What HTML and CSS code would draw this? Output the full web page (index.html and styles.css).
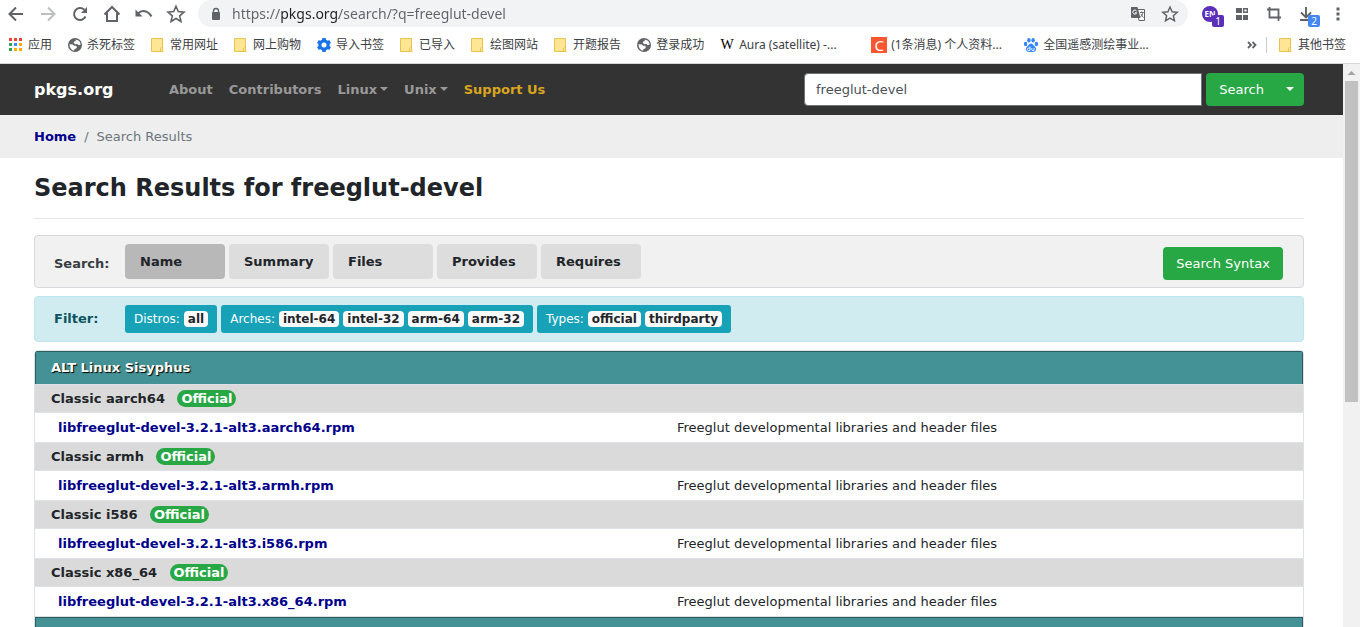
FILE: index.html
```html
<!DOCTYPE html>
<html lang="en">
<head>
    <meta charset="UTF-8">
    <meta name="viewport" content="width=device-width, initial-scale=1.0">
    <title>freeglut-devel - pkgs.org</title>
    <link rel="stylesheet" href="styles.css">
</head>
<body>
    <!-- shared icons -->
    <svg class="sprite" width="0" height="0">
        <symbol id="folder" viewBox="0 0 16 16">
            <path d="M1.500 1.500h11v10.500l.5 1v1.500h-11.500z" fill="#ffe694" stroke="#e8c44a"/>
            <path d="M10.500 14.500v-3l1-1 1 1" fill="none" stroke="#e8c44a"/>
        </symbol>
        <symbol id="globe" viewBox="0 0 16 16">
            <circle cx="8" cy="8" r="7" fill="#5f6368"/>
            <path d="M2.500 7.200l3.300.2 1.300 1.300h1.900l1 1.200-.8 1.500-1.600.6-.6 1.700c-2.800-.6-4.600-3.200-4.500-6.500zM8.500 2.600l3 .9c1.300.9 2 2.200 2.100 4l-1.800.7-1.400-1.100-2 .1-1.700-1.300.3-1.300 1.800-.4z" fill="#fff"/>
        </symbol>
        <symbol id="star" viewBox="0 0 20 20">
            <path d="M10 2.300l2.300 5.300 5.700.5-4.300 3.800 1.300 5.600-5-3-5 3 1.300-5.600L2 8.100l5.700-.5z" fill="none" stroke="#5f6368" stroke-width="1.600"/>
        </symbol>
    </svg>

    <header class="browser">
        <div class="toolbar">
            <button class="tool" aria-label="Back"><svg width="20" height="20" viewBox="0 0 20 20"><path d="M17 10H4M10 3.500L3.500 10l6.500 6.500" fill="none" stroke="#5f6368" stroke-width="2"/></svg></button>
            <button class="tool" aria-label="Forward"><svg width="20" height="20" viewBox="0 0 20 20"><path d="M3 10h13M10 3.500l6.500 6.500-6.500 6.500" fill="none" stroke="#bcbec1" stroke-width="2"/></svg></button>
            <button class="tool" aria-label="Reload"><svg width="20" height="20" viewBox="0 0 20 20"><path d="M15.500 12.500A6 6 0 1 1 14.300 5.800" fill="none" stroke="#5f6368" stroke-width="2"/><path d="M17 3v6h-6z" fill="#5f6368"/></svg></button>
            <button class="tool" aria-label="Home"><svg width="20" height="20" viewBox="0 0 20 20"><path d="M2.500 10.500L10 3l7.500 7.500M5 9v8h10V9" fill="none" stroke="#5f6368" stroke-width="2"/></svg></button>
            <button class="tool" aria-label="Undo"><svg width="20" height="20" viewBox="0 0 20 20"><path d="M4 9.500C8 5.500 14 6.500 17.500 12.500" fill="none" stroke="#5f6368" stroke-width="2"/><path d="M1.500 5.500v7h7z" fill="#5f6368"/></svg></button>
            <button class="tool" aria-label="Favourites"><svg width="20" height="20"><use href="#star"/></svg></button>
            <div class="omnibox">
                <svg width="14" height="14" viewBox="0 0 14 14"><rect x="3" y="5" width="8" height="8" rx="1" fill="#5f6368"/><path d="M4.500 5.500V4a2.500 2.500 0 0 1 5 0v1.500" fill="none" stroke="#5f6368" stroke-width="1.300"/></svg>
                <input class="url" type="text" aria-label="Address" value="https://pkgs.org/search/?q=freeglut-devel">
                <button class="tool" aria-label="Translate"><svg width="16" height="16" viewBox="0 0 16 16"><path d="M7 3.500h7.500v11H9z" fill="#fff" stroke="#5f6368"/><path d="M1 1h6.500L10.500 12H2a1 1 0 0 1-1-1z" fill="#5f6368"/><path d="M6.500 5a2 2 0 1 0 .2 1.800H5" fill="none" stroke="#fff"/><path d="M9.800 6.500h4M11.800 5.300v1.200M13 6.500c-.3 2-1.200 3.200-2.500 4.500M10.800 8l2.700 3.500" fill="none" stroke="#5f6368" stroke-width=".9"/></svg></button>
                <button class="tool" aria-label="Bookmark this page"><svg width="18" height="18" viewBox="0 0 20 20"><use href="#star" width="20" height="20"/></svg></button>
            </div>
            <button class="tool" aria-label="Dictionary"><span class="en">EN</span><span class="count purple">1</span></button>
            <button class="tool" aria-label="Extensions"><svg width="14" height="14" viewBox="0 0 14 14"><path d="M1 1h6v5H1zM1 8h6v5H1zM8 8h5v5H8z" fill="#5f6368"/><path d="M8.700 1.700h3.600v3.600H8.700z" fill="none" stroke="#5f6368" stroke-width="1.400"/></svg></button>
            <button class="tool" aria-label="Crop"><svg width="16" height="16" viewBox="0 0 16 16"><path d="M1 3.500h11.500V15M3.500 1v10.500H15" fill="none" stroke="#5f6368" stroke-width="1.800"/></svg></button>
            <button class="tool" aria-label="Downloads"><svg width="16" height="16" viewBox="0 0 16 16"><path d="M8 1v10M3 6.500L8 11.500 13 6.500M2 14h12" fill="none" stroke="#5f6368" stroke-width="1.900"/></svg><span class="count blue">2</span></button>
            <button class="tool" aria-label="Menu"><svg width="4" height="16" viewBox="0 0 4 16"><path d="M.5 1.500h3v3h-3zM.5 6.500h3v3h-3zM.5 11.500h3v3h-3z" fill="#5f6368"/></svg></button>
        </div>

        <nav class="bookmarks" aria-label="Bookmarks">
            <a href="#"><svg width="16" height="16" viewBox="0 0 16 16"><path d="M1 1h3v3H1zM6 1h3v3H6zM11 1h3v3h-3z" fill="#ea4335"/><path d="M1 6h3v3H1zM1 11h3v3H1z" fill="#34a060"/><path d="M6 6h3v3H6z" fill="#4285f4"/><path d="M11 6h3v3h-3zM6 11h3v3H6zM11 11h3v3h-3z" fill="#fbac05"/></svg>应用</a>
            <a href="#"><svg width="16" height="16"><use href="#globe"/></svg>杀死标签</a>
            <a href="#"><svg width="16" height="16"><use href="#folder"/></svg>常用网址</a>
            <a href="#"><svg width="16" height="16"><use href="#folder"/></svg>网上购物</a>
            <a href="#"><svg width="16" height="16" viewBox="0 0 16 16"><circle cx="8" cy="8" r="4" fill="none" stroke="#1a73e8" stroke-width="3.400"/><path d="M8 1v14M1.900 4.500l12.200 7M1.900 11.500l12.200-7" stroke="#1a73e8" stroke-width="3.600"/><circle cx="8" cy="8" r="2.500" fill="#fff"/></svg>导入书签</a>
            <a href="#"><svg width="16" height="16"><use href="#folder"/></svg>已导入</a>
            <a href="#"><svg width="16" height="16"><use href="#folder"/></svg>绘图网站</a>
            <a href="#"><svg width="16" height="16"><use href="#folder"/></svg>开题报告</a>
            <a href="#"><svg width="16" height="16"><use href="#globe"/></svg>登录成功</a>
            <a class="long" href="#"><span class="wiki">W</span>Aura (satellite) -...</a>
            <a class="long" href="#"><span class="csdn">C</span>(1条消息) 个人资料...</a>
            <a class="long" href="#"><svg width="16" height="16" viewBox="0 0 16 16"><g fill="#3385ff"><ellipse cx="2.600" cy="7" rx="1.700" ry="2.200"/><ellipse cx="5.900" cy="3.200" rx="1.700" ry="2.300"/><ellipse cx="10.100" cy="3.200" rx="1.700" ry="2.300"/><ellipse cx="13.400" cy="7" rx="1.700" ry="2.200"/><path d="M8 6.500c1.600 0 2.200 1.600 3.400 2.700 1.300 1.100 2 2.200 1.600 3.800-.5 1.900-2.600 2-5 2s-4.500-.1-5-2c-.4-1.600.3-2.700 1.600-3.800C5.800 8.100 6.400 6.500 8 6.500z"/></g><path d="M7 9.500v4H5.500a1.200 1.200 0 0 1 0-2.400H7M8.800 11v1.800c0 .5.300.7.700.7H11V11" fill="none" stroke="#fff" stroke-width=".9"/></svg>全国遥感测绘事业...</a>
            <button class="more" aria-label="More bookmarks"><svg width="10" height="8" viewBox="0 0 10 8"><path d="M1 1l3 3-3 3M5.500 1l3 3-3 3" fill="none" stroke="#5f6368" stroke-width="1.800"/></svg></button>
            <a class="other" href="#"><svg width="16" height="16"><use href="#folder"/></svg>其他书签</a>
        </nav>
    </header>

    <div class="viewport">
        <div class="page">
            <nav class="navbar">
                <a class="brand" href="#">pkgs.org</a>
                <a class="nav-link" href="#">About</a>
                <a class="nav-link" href="#">Contributors</a>
                <a class="nav-link caret" href="#">Linux</a>
                <a class="nav-link caret" href="#">Unix</a>
                <a class="nav-link support" href="#">Support Us</a>
                <form class="search-form">
                    <input class="query" type="text" name="q" aria-label="Package" value="freeglut-devel">
                    <div class="btn-group">
                        <button class="btn" type="button">Search</button>
                        <button class="btn toggle caret" type="button" aria-label="Search options"></button>
                    </div>
                </form>
            </nav>

            <div class="breadcrumb">
                <a href="#">Home</a>
                <span class="slash">/</span>
                <span>Search Results</span>
            </div>

            <main class="content">
                <h1>Search Results for freeglut-devel</h1>

                <div class="panel search-panel">
                    <strong class="label">Search:</strong>
                    <button class="tab active">Name</button>
                    <button class="tab">Summary</button>
                    <button class="tab">Files</button>
                    <button class="tab">Provides</button>
                    <button class="tab">Requires</button>
                    <button class="btn syntax">Search Syntax</button>
                </div>

                <div class="panel filter-panel">
                    <strong class="label">Filter:</strong>
                    <button class="filter">Distros: <span class="badge">all</span></button>
                    <button class="filter">Arches: <span class="badge">intel-64</span><span class="badge">intel-32</span><span class="badge">arm-64</span><span class="badge">arm-32</span></button>
                    <button class="filter">Types: <span class="badge">official</span><span class="badge">thirdparty</span></button>
                </div>

                <div class="card">
                    <table class="results">
                        <tr class="distro"><th colspan="2">ALT Linux Sisyphus</th></tr>
                        <tr class="repo"><th colspan="2">Classic aarch64 <span class="official">Official</span></th></tr>
                        <tr class="package"><td><a href="#">libfreeglut-devel-3.2.1-alt3.aarch64.rpm</a></td><td>Freeglut developmental libraries and header files</td></tr>
                        <tr class="repo"><th colspan="2">Classic armh <span class="official">Official</span></th></tr>
                        <tr class="package"><td><a href="#">libfreeglut-devel-3.2.1-alt3.armh.rpm</a></td><td>Freeglut developmental libraries and header files</td></tr>
                        <tr class="repo"><th colspan="2">Classic i586 <span class="official">Official</span></th></tr>
                        <tr class="package"><td><a href="#">libfreeglut-devel-3.2.1-alt3.i586.rpm</a></td><td>Freeglut developmental libraries and header files</td></tr>
                        <tr class="repo"><th colspan="2">Classic x86_64 <span class="official">Official</span></th></tr>
                        <tr class="package"><td><a href="#">libfreeglut-devel-3.2.1-alt3.x86_64.rpm</a></td><td>Freeglut developmental libraries and header files</td></tr>
                        <tr class="distro"><th colspan="2"></th></tr>
                    </table>
                </div>
            </main>
        </div>

        <div class="scrollbar">
            <svg width="17" height="17" viewBox="0 0 17 17"><path d="M4.500 11h8L8.500 7z" fill="#a3a3a3"/></svg>
            <div class="thumb"></div>
        </div>
    </div>
</body>
</html>
```
FILE: styles.css
```css
* {
    box-sizing: border-box;
}

body {
    margin: 0;
    height: 100vh;
    display: flex;
    flex-direction: column;
    overflow: hidden;
    background: #fff;
    color: #212529;
    font-family: Verdana, "DejaVu Sans", sans-serif;
    font-size: 13px;
    line-height: 20px;
}

a {
    text-decoration: none;
}

button,
input {
    font: inherit;
    border: 0;
    margin: 0;
    padding: 0;
}

.sprite {
    position: absolute;
}

/* Browser chrome */
.browser {
    flex: none;
    border-bottom: 1px solid #d5d6d8;
    font-family: "Noto Sans", "Noto Sans CJK SC", sans-serif;
}

.toolbar {
    display: flex;
    height: 27px;
    padding-right: 6px;
}

.tool {
    position: relative;
    width: 32px;
    height: 27px;
    display: flex;
    align-items: center;
    justify-content: center;
    background: none;
}

.omnibox {
    flex: 1;
    display: flex;
    align-items: center;
    gap: 9px;
    margin: 0 6px;
    padding: 0 2px 0 11px;
    background: #f1f3f4;
    border-radius: 14px;
}

.omnibox .tool + .tool {
    margin-left: -9px;
}

/* host name is darker than the rest of the address */
.url {
    flex: 1;
    min-width: 0;
    font-size: 14px;
    color: transparent;
    background: linear-gradient(90deg, #5f6368 49px, #202124 49px, #202124 107px, #5f6368 107px);
    -webkit-background-clip: text;
    background-clip: text;
}

.en {
    width: 16px;
    height: 16px;
    border-radius: 50%;
    background: #5b2fb8;
    color: #fff;
    font-size: 8px;
    font-weight: 700;
    line-height: 16px;
    text-align: center;
}

.count {
    position: absolute;
    right: 2px;
    bottom: 0;
    width: 12px;
    height: 12px;
    border-radius: 2px;
    color: #fff;
    font-size: 10px;
    line-height: 12px;
}

.purple {
    background: #5b2fb8;
}

.blue {
    background: #4285f4;
}

.bookmarks {
    display: flex;
    align-items: center;
    gap: 15px;
    height: 36px;
    padding: 0 14px 0 8px;
    font-size: 12px;
}

.bookmarks a {
    display: flex;
    align-items: center;
    gap: 4px;
    color: #3c4043;
    white-space: nowrap;
}

.bookmarks .long {
    width: 137px;
}

.wiki,
.csdn {
    width: 16px;
    height: 16px;
    line-height: 16px;
    text-align: center;
}

.wiki {
    color: #000;
    font-family: "Liberation Serif", serif;
    font-size: 14px;
}

.csdn {
    background: #fc5531;
    color: #fff;
    font-size: 15px;
}

.more {
    display: flex;
    margin-left: auto;
    background: none;
}

.bookmarks .other {
    height: 16px;
    margin-left: -6px;
    padding-left: 11px;
    border-left: 1px solid #c8cacd;
}

/* Page */
.viewport {
    flex: 1;
    min-height: 0;
    display: flex;
}

.page {
    flex: 1;
    min-width: 0;
    overflow: hidden;
}

.scrollbar {
    width: 17px;
    background: #f1f1f1;
}

.scrollbar svg {
    display: block;
}

.thumb {
    height: 57%;
    margin: 0 2px;
    background: #c1c1c1;
}

.navbar {
    display: flex;
    align-items: center;
    gap: 16px;
    height: 51px;
    padding: 0 39px 0 34px;
    background: #333;
    font-weight: 700;
}

.brand {
    width: 119px;
    color: #fff;
    font-size: 16px;
}

.nav-link {
    color: #999;
    white-space: nowrap;
}

.support {
    color: #daa520;
}

.caret::after {
    content: "";
    display: inline-block;
    margin-left: 3px;
    vertical-align: 3px;
    border: 4px solid transparent;
    border-top-color: currentColor;
    border-bottom: 0;
}

.search-form {
    width: 500px;
    margin-left: auto;
    display: flex;
    gap: 4px;
    font-weight: 400;
}

.query {
    flex: 1;
    min-width: 0;
    height: 33px;
    padding: 0 11px;
    border: 1px solid #6c757d;
    border-radius: 4px 0 0 4px;
    color: #495057;
}

.btn-group {
    display: flex;
    border-radius: 4px;
    overflow: hidden;
}

.btn {
    height: 33px;
    padding: 0 13px;
    border-radius: 4px;
    background: #28a745;
    color: #fff;
    white-space: nowrap;
}

.btn-group .btn {
    border-radius: 0;
}

.btn-group .toggle {
    padding: 0 10px 0 9px;
}

.btn-group .toggle::after {
    margin: 0;
}

.breadcrumb {
    display: flex;
    align-items: center;
    gap: 8px;
    height: 43px;
    padding: 0 34px;
    background: #eee;
    color: #6c757d;
}

.breadcrumb a {
    color: #00008b;
    font-weight: 700;
}

.content {
    padding: 0 39px 0 34px;
}

h1 {
    margin: 0 0 16px;
    padding: 14px 0;
    border-bottom: 1px solid #e5e5e5;
    font-size: 24px;
    line-height: 32px;
}

.panel {
    display: flex;
    align-items: center;
    gap: 4px;
    margin-bottom: 8px;
    padding: 8px 20px 8px 19px;
    border: 1px solid #d6d8db;
    border-radius: 4px;
}

.label {
    width: 67px;
}

.search-panel {
    height: 53px;
    padding-bottom: 4px;
    background: #f1f1f1;
    color: #383d41;
}

.filter-panel {
    height: 46px;
    background: #d1ecf1;
    border-color: #bee5eb;
    color: #0c5460;
}

.tab {
    align-self: flex-start;
    width: 100px;
    height: 35px;
    padding: 0 15px;
    border-radius: 4px;
    background: #ddd;
    color: #212529;
    font-weight: 700;
    text-align: left;
}

.tab.active {
    background: #b8b8b8;
}

.syntax {
    margin-left: auto;
}

.filter {
    display: flex;
    align-items: center;
    gap: 4px;
    height: 28px;
    padding: 0 9px;
    border-radius: 3px;
    background: #17a2b8;
    color: #fff;
    font-size: 12px;
}

.badge {
    padding: 0 4px;
    border-radius: 4px;
    background: #f8f9fa;
    color: #212529;
    font-weight: 700;
    line-height: 16px;
}

.card {
    border: 1px solid #dee2e6;
    border-radius: 4px;
    overflow: hidden;
}

.results {
    width: 100%;
    table-layout: fixed;
    border-collapse: separate;
    border-spacing: 0;
}

.results th,
.results td {
    padding: 0 16px;
    border-top: 1px solid #dee2e6;
    text-align: left;
}

.results .distro th {
    height: 34px;
    background: #449296;
    box-shadow: inset 1px 1px #2b5c5e, inset -1px 0 #2b5c5e;
    color: #fff;
    text-shadow: 1px 1px 1px #000;
}

.results .distro:first-child th {
    height: 33px;
    border-top: 0;
}

.results .repo th {
    height: 28px;
    background: #dadada;
}

.results .package td {
    height: 30px;
    padding: 0 8px;
}

.results .package td:first-child {
    padding-left: 23px;
}

.package a {
    color: #00008b;
    font-weight: 700;
}

.official {
    display: inline-block;
    margin-left: 8px;
    padding: 0 4px;
    border-radius: 9px;
    background: #28a745;
    color: #fff;
    line-height: 17px;
}
```
